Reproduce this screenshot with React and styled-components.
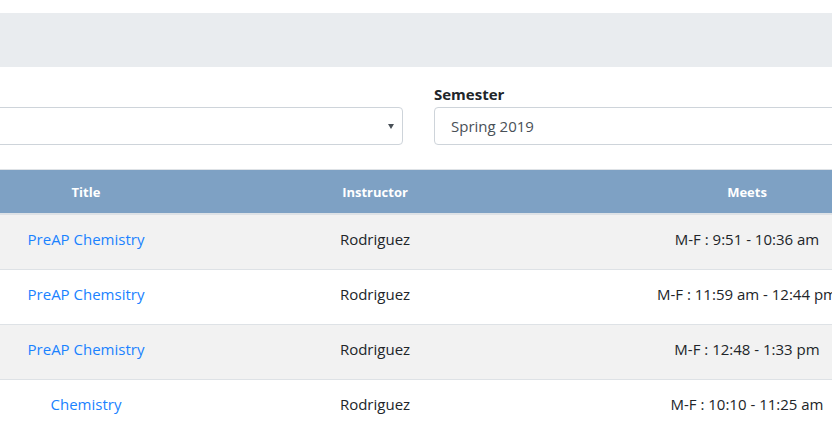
import React from 'react'
import styled, { createGlobalStyle } from 'styled-components'

const GlobalStyle = createGlobalStyle`
  html, body {
    margin: 0;
    padding: 0;
    overflow: hidden;
    background: #ffffff;
  }
  body {
    font-family: "Open Sans", "Noto Sans", sans-serif;
    font-size: 15px;
    color: #212529;
  }
`

const courses = [
  { title: 'PreAP Chemistry', instructor: 'Rodriguez', meets: 'M-F : 9:51 - 10:36 am' },
  { title: 'PreAP Chemsitry', instructor: 'Rodriguez', meets: 'M-F : 11:59 am - 12:44 pm' },
  { title: 'PreAP Chemistry', instructor: 'Rodriguez', meets: 'M-F : 12:48 - 1:33 pm' },
  { title: 'Chemistry', instructor: 'Rodriguez', meets: 'M-F : 10:10 - 11:25 am' },
]

const App = () => {
  return (
    <>
      <GlobalStyle />
      <TopStrip />
      <Banner />
      <Page>
        <FormRow>
          <Field>
            <Label hidden>Course</Label>
            <SelectBox>
              <Caret />
            </SelectBox>
          </Field>
          <Field>
            <Label>Semester</Label>
            <InputBox>Spring 2019</InputBox>
          </Field>
        </FormRow>
        <Table>
          <colgroup>
            <col style={{ width: 228 }} />
            <col style={{ width: 350 }} />
            <col style={{ width: 394 }} />
          </colgroup>
          <thead>
            <tr>
              <Th>Title</Th>
              <Th>Instructor</Th>
              <Th>Meets</Th>
            </tr>
          </thead>
          <tbody>
            {courses.map((c, i) => (
              <Row key={i} $striped={i % 2 === 0}>
                <Td><CourseLink href="#">{c.title}</CourseLink></Td>
                <Td>{c.instructor}</Td>
                <Td>{c.meets}</Td>
              </Row>
            ))}
          </tbody>
        </Table>
      </Page>
    </>
  )
}

export default App

const TopStrip = styled.div`
  height: 13px;
  background: #ffffff;
`

const Banner = styled.div`
  height: 54px;
  background: #e9ecef;
`

const Page = styled.div`
  margin-left: -28px;
  width: 972px;
  padding-top: 16px;
`

const FormRow = styled.div`
  display: grid;
  grid-template-columns: 431px 431px;
  column-gap: 31px;
  margin-bottom: 24px;
`

const Field = styled.div`
  display: flex;
  flex-direction: column;
`

const Label = styled.label`
  font-weight: 700;
  font-size: 15px;
  line-height: 22px;
  margin-bottom: 2px;
  visibility: ${p => (p.hidden ? 'hidden' : 'visible')};
  display: block;
`

const SelectBox = styled.div`
  position: relative;
  height: 38px;
  box-sizing: border-box;
  border: 1px solid #ced4da;
  border-radius: 4px;
  background: #ffffff;
`

const Caret = styled.span`
  position: absolute;
  right: 8px;
  top: 16px;
  width: 0;
  height: 0;
  border-left: 3px solid transparent;
  border-right: 3px solid transparent;
  border-top: 5px solid #495057;
`

const InputBox = styled.div`
  height: 38px;
  box-sizing: border-box;
  border: 1px solid #ced4da;
  border-radius: 4px;
  padding: 0 16px;
  display: flex;
  align-items: center;
  color: #495057;
  font-size: 15px;
`

const Table = styled.table`
  width: 972px;
  table-layout: fixed;
  border-collapse: collapse;
  border-top: 1px solid #dee2e6;
`

const Th = styled.th`
  background: #7ea1c4;
  color: #ffffff;
  font-size: 13px;
  font-weight: 700;
  height: 43px;
  padding: 0;
  text-align: center;
  vertical-align: middle;
  border-bottom: 2px solid #dee2e6;
`

const Row = styled.tr`
  background: ${p => (p.$striped ? '#f2f2f2' : '#ffffff')};
`

const Td = styled.td`
  height: 55px;
  padding: 0 0 5px;
  box-sizing: border-box;
  text-align: center;
  vertical-align: middle;
  font-size: 15px;
  color: #212529;
  white-space: nowrap;
  border-top: 1px solid #dee2e6;
`

const CourseLink = styled.a`
  color: #1a82ff;
  text-decoration: none;
`
